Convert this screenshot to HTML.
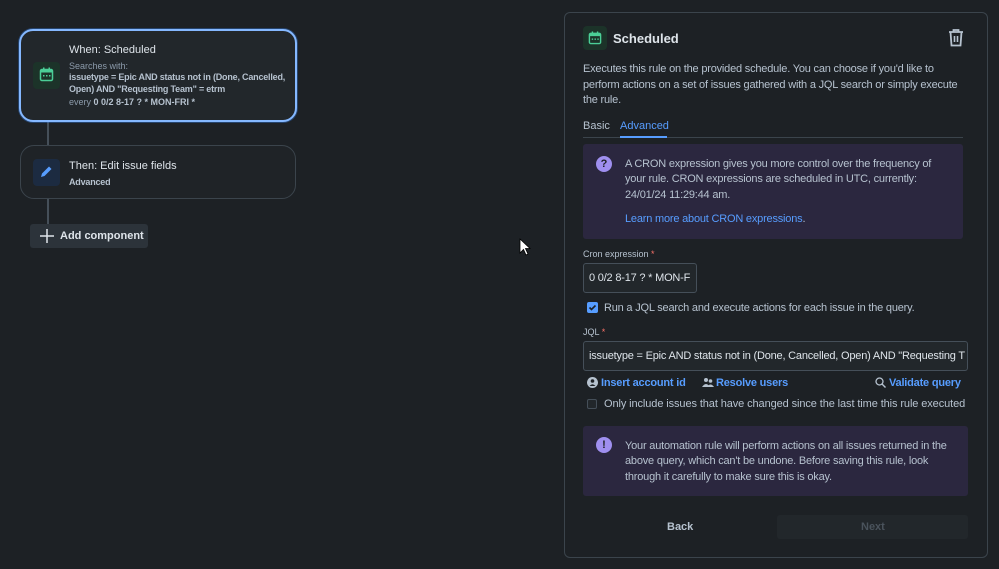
<!DOCTYPE html>
<html><head><meta charset="utf-8"><style>
*{box-sizing:border-box;margin:0;padding:0}
body{width:999px;height:569px;background:#1d2125;font-family:"Liberation Sans",sans-serif;color:#b6c2cf;position:relative;overflow:hidden}
.a{position:absolute;white-space:nowrap}
.card{position:absolute;background:#22272b;border-radius:14px}
.t{font-size:11px;color:#dee4ea}
.s{font-size:9px;color:#8c9bab}
.b{font-size:9px;color:#b6c2cf;font-weight:bold;line-height:12px;letter-spacing:-0.2px}
.link{color:#579dff}
.n{letter-spacing:-0.2px}
</style></head><body>
<div class="a" style="left:47px;top:121px;width:2px;height:104px;background:#454f59"></div>
<div class="card" style="left:19px;top:29px;width:278px;height:93px;border:2px solid #85b8ff;box-shadow:0 0 0 1px #388bff55"></div>
<div class="a" style="left:33px;top:62px;width:27px;height:27px;background:#1c3329;border-radius:4px"></div>
<svg class="a" style="left:39px;top:67px" width="15" height="15" viewBox="0 0 15 15"><rect x="1.5" y="2.5" width="12" height="11" rx="1.5" fill="none" stroke="#4bce97" stroke-width="1.5"/><rect x="1.5" y="2.5" width="12" height="3" fill="#4bce97"/><rect x="4" y="0.5" width="1.5" height="3" fill="#4bce97"/><rect x="9.5" y="0.5" width="1.5" height="3" fill="#4bce97"/><rect x="4" y="8" width="1.5" height="1.5" fill="#4bce97"/><rect x="7" y="8" width="1.5" height="1.5" fill="#4bce97"/><rect x="10" y="8" width="1.5" height="1.5" fill="#4bce97"/></svg>
<div class="a t" style="left:69px;top:44px">When: Scheduled</div>
<div class="a s" style="left:69px;top:61px">Searches with:</div>
<div class="a b" style="left:69px;top:71px">issuetype = Epic AND status not in (Done, Cancelled,<br>Open) AND "Requesting Team" = etrm</div>
<div class="a s" style="left:69px;top:97px">every <b style="color:#b6c2cf">0 0/2 8-17 ? * MON-FRI *</b></div>

<div class="card" style="left:20px;top:145px;width:276px;height:54px;border:1px solid #3b444c;background:#1f2327"></div>
<div class="a" style="left:33px;top:159px;width:27px;height:27px;background:#1c2b41;border-radius:4px"></div>
<svg class="a" style="left:38px;top:164px" width="16" height="16" viewBox="0 0 16 16"><path d="M3 13 L4 9.5 L11 2.5 L13.5 5 L6.5 12 Z" fill="#579dff"/></svg>
<div class="a t" style="left:69px;top:160px">Then: Edit issue fields</div>
<div class="a b" style="left:69px;top:176px">Advanced</div>

<div class="a" style="left:30px;top:224px;width:118px;height:24px;background:#2c333a;border-radius:3px"></div>
<svg class="a" style="left:40px;top:229px" width="14" height="14"><path d="M7 0V14M0 7H14" stroke="#dee4ea" stroke-width="1.5"/></svg>
<div class="a" style="left:60px;top:230px;font-size:11px;font-weight:bold;color:#dee4ea">Add component</div>

<svg class="a" style="left:519px;top:238px" width="12" height="18"><path d="M1 1V15L4.5 11.5L7 17L9 16L6.5 10.5H11Z" fill="#fff" stroke="#000" stroke-width=".8"/></svg>

<div class="a" style="left:564px;top:12px;width:424px;height:546px;background:#1d2125;border:1px solid #3b444c;border-radius:6px"></div>
<div class="a" style="left:583px;top:26px;width:24px;height:24px;background:#1c3329;border-radius:4px"></div>
<svg class="a" style="left:588px;top:31px" width="14" height="14" viewBox="0 0 15 15"><rect x="1.5" y="2.5" width="12" height="11" rx="1.5" fill="none" stroke="#4bce97" stroke-width="1.5"/><rect x="1.5" y="2.5" width="12" height="3" fill="#4bce97"/><rect x="4" y="0.5" width="1.5" height="3" fill="#4bce97"/><rect x="9.5" y="0.5" width="1.5" height="3" fill="#4bce97"/><rect x="4" y="8" width="1.5" height="1.5" fill="#4bce97"/><rect x="7" y="8" width="1.5" height="1.5" fill="#4bce97"/><rect x="10" y="8" width="1.5" height="1.5" fill="#4bce97"/></svg>
<div class="a" style="left:613px;top:31px;font-size:13px;font-weight:bold;color:#dee4ea">Scheduled</div>
<svg class="a" style="left:947px;top:28px" width="18" height="19" viewBox="0 0 18 19"><path d="M2 4H16M6.5 4V2H11.5V4M3.5 4L4.5 17.5H13.5L14.5 4" fill="none" stroke="#b6c2cf" stroke-width="1.8"/><path d="M7.5 8V14M10.5 8V14" stroke="#b6c2cf" stroke-width="1.6"/></svg>
<div class="a n" style="left:583px;top:62px;font-size:11px;line-height:15.5px;color:#b6c2cf">Executes this rule on the provided schedule. You can choose if you'd like to<br>perform actions on a set of issues gathered with a JQL search or simply execute<br>the rule.</div>
<div class="a" style="left:583px;top:120px;font-size:11px;color:#b6c2cf">Basic</div>
<div class="a" style="left:620px;top:120px;font-size:11px;color:#579dff">Advanced</div>
<div class="a" style="left:583px;top:137px;width:380px;height:1px;background:#3b444c"></div>
<div class="a" style="left:620px;top:136px;width:47px;height:2px;background:#579dff"></div>

<div class="a" style="left:583px;top:144px;width:380px;height:95px;background:#2b273f;border-radius:3px"></div>
<div class="a" style="left:596px;top:156px;width:16px;height:16px;border-radius:50%;background:#9f8fef;color:#1d2125;font-size:11px;font-weight:bold;text-align:center;line-height:16px">?</div>
<div class="a n" style="left:625px;top:157px;font-size:11px;line-height:15.3px;color:#b6c2cf">A CRON expression gives you more control over the frequency of<br>your rule. CRON expressions are scheduled in UTC, currently:<br>24/01/24 11:29:44 am.</div>
<div class="a n" style="left:625px;top:213px;font-size:11px;color:#b6c2cf"><span class="link">Learn more about CRON expressions</span>.</div>

<div class="a" style="left:583px;top:249px;font-size:9px;color:#b6c2cf">Cron expression <span style="color:#f87168">*</span></div>
<div class="a n" style="left:583px;top:263px;width:114px;height:30px;background:#22272b;border:1px solid #454f59;border-radius:3px;font-size:11px;color:#dee4ea;padding:8px 0 0 5px;overflow:hidden">0 0/2 8-17 ? * MON-F</div>
<div class="a" style="left:587px;top:302px;width:11px;height:11px;background:#579dff;border-radius:2px"></div>
<svg class="a" style="left:587px;top:302px" width="11" height="11"><path d="M2.5 5.5L4.5 7.5L8.5 3.5" stroke="#1d2125" stroke-width="1.6" fill="none"/></svg>
<div class="a n" style="left:604px;top:302px;font-size:11px;color:#b6c2cf">Run a JQL search and execute actions for each issue in the query.</div>
<div class="a" style="left:583px;top:327px;font-size:9px;color:#b6c2cf">JQL <span style="color:#f87168">*</span></div>
<div class="a n" style="left:583px;top:341px;width:385px;height:30px;background:#22272b;border:1px solid #454f59;border-radius:3px;font-size:11px;color:#dee4ea;padding:8px 0 0 5px;overflow:hidden">issuetype = Epic AND status not in (Done, Cancelled, Open) AND "Requesting T</div>
<svg class="a" style="left:587px;top:377px" width="11" height="11"><circle cx="5.5" cy="5.5" r="5.5" fill="#b6c2cf"/><circle cx="5.5" cy="4" r="1.8" fill="#1d2125"/><path d="M2.5 9 Q5.5 5.5 8.5 9" fill="#1d2125"/></svg>
<div class="a n" style="left:601px;top:377px;font-size:11px;font-weight:bold;color:#579dff">Insert account id</div>
<svg class="a" style="left:702px;top:377px" width="12" height="10"><circle cx="4" cy="3" r="2" fill="#b6c2cf"/><circle cx="8.5" cy="4" r="1.8" fill="#b6c2cf"/><path d="M0 10Q4 4 8 10ZM5 10Q8.5 5 12 10Z" fill="#b6c2cf"/></svg>
<div class="a n" style="left:716px;top:377px;font-size:11px;font-weight:bold;color:#579dff">Resolve users</div>
<svg class="a" style="left:875px;top:377px" width="11" height="11"><circle cx="4.5" cy="4.5" r="3.5" fill="none" stroke="#b6c2cf" stroke-width="1.3"/><path d="M7 7L10.5 10.5" stroke="#b6c2cf" stroke-width="1.4"/></svg>
<div class="a n" style="left:889px;top:377px;font-size:11px;font-weight:bold;color:#579dff">Validate query</div>
<div class="a" style="left:587px;top:399px;width:10px;height:10px;border:1px solid #454f59;border-radius:2px;background:#22272b"></div>
<div class="a" style="left:604px;top:398px;font-size:11px;color:#b6c2cf;letter-spacing:-0.1px">Only include issues that have changed since the last time this rule executed</div>

<div class="a" style="left:583px;top:426px;width:385px;height:70px;background:#2b273f;border-radius:3px"></div>
<div class="a" style="left:596px;top:437px;width:16px;height:16px;border-radius:50%;background:#9f8fef;color:#1d2125;font-size:11px;font-weight:bold;text-align:center;line-height:16px">!</div>
<div class="a n" style="left:625px;top:439px;font-size:11px;line-height:15.3px;color:#b6c2cf">Your automation rule will perform actions on all issues returned in the<br>above query, which can't be undone. Before saving this rule, look<br>through it carefully to make sure this is okay.</div>

<div class="a" style="left:667px;top:521px;font-size:11px;font-weight:bold;color:#b6c2cf">Back</div>
<div class="a" style="left:777px;top:515px;width:191px;height:24px;background:#22272b;border-radius:3px"></div>
<div class="a" style="left:861px;top:521px;font-size:11px;font-weight:bold;color:#4a535c">Next</div>
</body></html>
